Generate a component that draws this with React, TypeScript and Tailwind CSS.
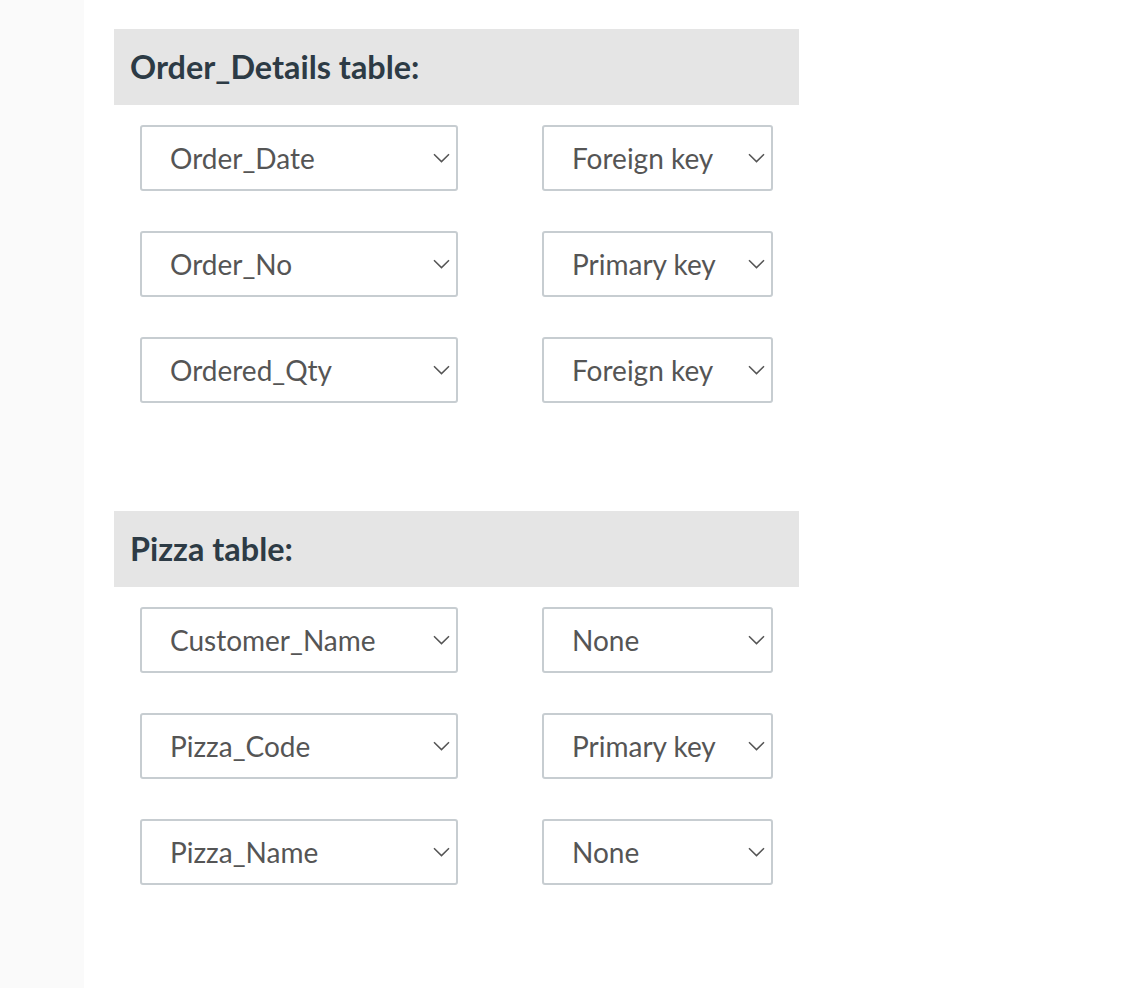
const sections = [
  {
    title: 'Order_Details table:',
    rows: [
      ['Order_Date', 'Foreign key'],
      ['Order_No', 'Primary key'],
      ['Ordered_Qty', 'Foreign key'],
    ],
  },
  {
    title: 'Pizza table:',
    rows: [
      ['Customer_Name', 'None'],
      ['Pizza_Code', 'Primary key'],
      ['Pizza_Name', 'None'],
    ],
  },
]

function Chevron() {
  return (
    <svg width="17" height="10" viewBox="0 0 17 10" className="shrink-0">
      <path d="M1 1.2 L8.5 8.6 L16 1.2" fill="none" stroke="#555" strokeWidth="1.5" />
    </svg>
  )
}

function FakeSelect({ value, width }: { value: string; width: string }) {
  return (
    <div
      className={`${width} flex h-[66px] items-center justify-between rounded-[3px] border-2 border-[#c7cdd1] bg-white pl-[28px] pr-[6px] text-[28px] text-[#555]`}
    >
      <span>{value}</span>
      <Chevron />
    </div>
  )
}

export default function App() {
  return (
    <div className="flex min-h-[988px] bg-white font-['Lato','Noto_Sans',sans-serif]">
      <div className="w-[84px] shrink-0 bg-[#fafafa]" />
      <div className="flex-1 pl-[30px] pt-[29px]">
        {sections.map((s, i) => (
          <section key={s.title} className={i > 0 ? 'mt-[108px]' : ''}>
            <div className="flex h-[76px] w-[685px] items-center bg-[#e5e5e5] pl-[16px]">
              <h2 className="text-[32.4px] font-bold text-[#2d3b45]">{s.title}</h2>
            </div>
            <div className="flex flex-col gap-[40px] pl-[26px] pt-[20px]">
              {s.rows.map(([a, b]) => (
                <div key={a} className="flex gap-[84px]">
                  <FakeSelect value={a} width="w-[318px]" />
                  <FakeSelect value={b} width="w-[231px]" />
                </div>
              ))}
            </div>
          </section>
        ))}
      </div>
    </div>
  )
}
